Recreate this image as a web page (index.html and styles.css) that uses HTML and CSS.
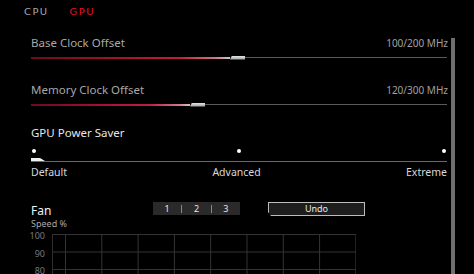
FILE: index.html
```html
<!DOCTYPE html>
<html>
<head>
<meta charset="utf-8">
<link rel="stylesheet" href="styles.css">
</head>
<body>
<div class="app">
  <div class="main">
    <div class="tabs">
      <span class="tab">CPU</span>
      <span class="tab active">GPU</span>
    </div>

    <div class="setting s1">
      <div class="head"><span class="label">Base Clock Offset</span><span class="value">100/200 MHz</span></div>
      <div class="track">
        <div class="fill" style="width:199px"></div>
        <div class="thumb"></div>
        <div class="rest"></div>
      </div>
    </div>

    <div class="setting s2">
      <div class="head"><span class="label">Memory Clock Offset</span><span class="value">120/300 MHz</span></div>
      <div class="track">
        <div class="fill" style="width:159px"></div>
        <div class="thumb"></div>
        <div class="rest"></div>
      </div>
    </div>

    <div class="saver">
      <div class="label bright">GPU Power Saver</div>
      <div class="dots"><span class="dot"></span><span class="dot"></span><span class="dot"></span></div>
      <div class="line"><div class="mini-thumb"></div></div>
      <div class="ticks"><span>Default</span><span>Advanced</span><span>Extreme</span></div>
    </div>

    <div class="fan">
      <div class="fan-title">
        <div class="fan-name">Fan</div>
        <div class="fan-sub">Speed %</div>
      </div>
      <div class="segments">
        <span class="seg">1</span><span class="sep"></span><span class="seg">2</span><span class="sep"></span><span class="seg">3</span>
      </div>
      <div class="undo">Undo</div>
    </div>

    <div class="chart">
      <div class="axis"><span>100</span><span>90</span><span>80</span></div>
      <div class="grid"></div>
    </div>
  </div>
  <div class="scrollbar"></div>
</div>
</body>
</html>
```

FILE: styles.css
```css
html, body {
  margin: 0;
  padding: 0;
  background: #000;
  width: 474px;
  height: 274px;
  overflow: hidden;
  font-family: "Noto Sans", "Open Sans", sans-serif;
}

.app {
  display: flex;
  height: 274px;
  overflow: hidden;
}

.main {
  width: 416px;
  padding-left: 31px;
  padding-right: 4px;
  display: flex;
  flex-direction: column;
}

.main > * {
  flex-shrink: 0;
}

.tabs {
  height: 34px;
  display: flex;
  gap: 21px;
  margin-left: -7px;
  padding-top: 5px;
  box-sizing: border-box;
}

.tab {
  font-family: "DejaVu Sans", sans-serif;
  font-size: 10px;
  letter-spacing: 1.4px;
  color: #a8a8a8;
  line-height: 11px;
  transform: scaleY(0.85);
}

.tab.active {
  color: #e8102e;
}

.head {
  display: flex;
  justify-content: space-between;
  align-items: baseline;
  height: 17px;
}

.label {
  font-size: 11.5px;
  color: #a8a8a8;
  line-height: 17px;
}

.label.bright {
  color: #e6e6e6;
}

.value {
  font-size: 10px;
  color: #a0a0a0;
  margin-right: -1px;
}

.setting {
  display: flex;
  flex-direction: column;
}

.track {
  margin-top: 4px;
  display: flex;
  align-items: center;
  height: 5px;
}

.track > * {
  flex-shrink: 0;
}

.fill {
  height: 2px;
  background: linear-gradient(to right, #6a0c1c, #a81030 45%, #c02040 75%, #d07888 93%, #c8c8c8);
}

.thumb {
  width: 15px;
  height: 4px;
  background: linear-gradient(to bottom, #e4e4e4, #9a9a9a);
  clip-path: polygon(2px 0, 100% 0, 100% 100%, 0 100%);
}

.track .rest {
  flex: 1 1 auto;
  height: 1px;
  background: #5a5a5a;
}

.s2 {
  margin-top: 21px;
}

.saver {
  margin-top: 17px;
  display: flex;
  flex-direction: column;
}

.dots {
  display: flex;
  justify-content: space-between;
  padding: 0 1px;
  margin-top: 8px;
}

.dot {
  width: 4px;
  height: 4px;
  border-radius: 50%;
  background: #fff;
}

.line {
  margin-top: 4px;
  height: 4px;
  border-bottom: 1px solid #6a6a6a;
  display: flex;
  align-items: flex-end;
}

.mini-thumb {
  width: 14px;
  height: 3px;
  background: #f0f0f0;
  clip-path: polygon(0 0, 9px 0, 100% 100%, 0 100%);
}

.ticks {
  display: flex;
  justify-content: space-between;
  font-size: 10.5px;
  color: #d8d8d8;
  line-height: 14px;
  margin-top: 3px;
}

.fan {
  margin-top: 23px;
  display: flex;
  align-items: flex-start;
}

.fan-title {
  width: 122px;
  display: flex;
  flex-direction: column;
}

.fan-name {
  font-size: 12px;
  color: #f2f2f2;
  line-height: 13px;
  margin-top: 2px;
}

.fan-sub {
  font-size: 9px;
  color: #a8a8a8;
  line-height: 11px;
  margin-top: 1px;
}

.segments {
  display: flex;
  align-items: center;
  width: 87px;
  height: 13px;
  background: #2a2a2a;
}

.seg {
  flex: 1;
  text-align: center;
  font-size: 9px;
  color: #e8e8e8;
  line-height: 13px;
}

.sep {
  width: 1px;
  height: 8px;
  background: #888;
}

.undo {
  margin-left: 28px;
  width: 95px;
  height: 12px;
  border: 1px solid #bdbdbd;
  background: #1e1e1e;
  color: #e8e8e8;
  font-size: 9px;
  line-height: 12px;
  text-align: center;
  clip-path: polygon(0 0, 100% 0, 100% 100%, 3px 100%, 0 10px);
}

.chart {
  margin-top: 5px;
  display: flex;
  flex: 1 0 auto;
}

.axis {
  width: 14px;
  display: flex;
  flex-direction: column;
  align-items: flex-end;
  font-size: 9px;
  color: #7a7a7a;
  line-height: 17.5px;
  margin-top: -7px;
}

.grid {
  margin-left: 7px;
  width: 303px;
  border-left: 1px solid #2e2e2e;
  background-image:
    linear-gradient(to bottom, #343434 1px, transparent 1px),
    linear-gradient(to right, #343434 1px, transparent 1px);
  background-size: 100% 17.5px, 36.3px 100%;
  background-position: 0 0, 12px 0;
}

.scrollbar {
  width: 4px;
  margin-top: 38px;
  background: #6e6e6e;
}
```
